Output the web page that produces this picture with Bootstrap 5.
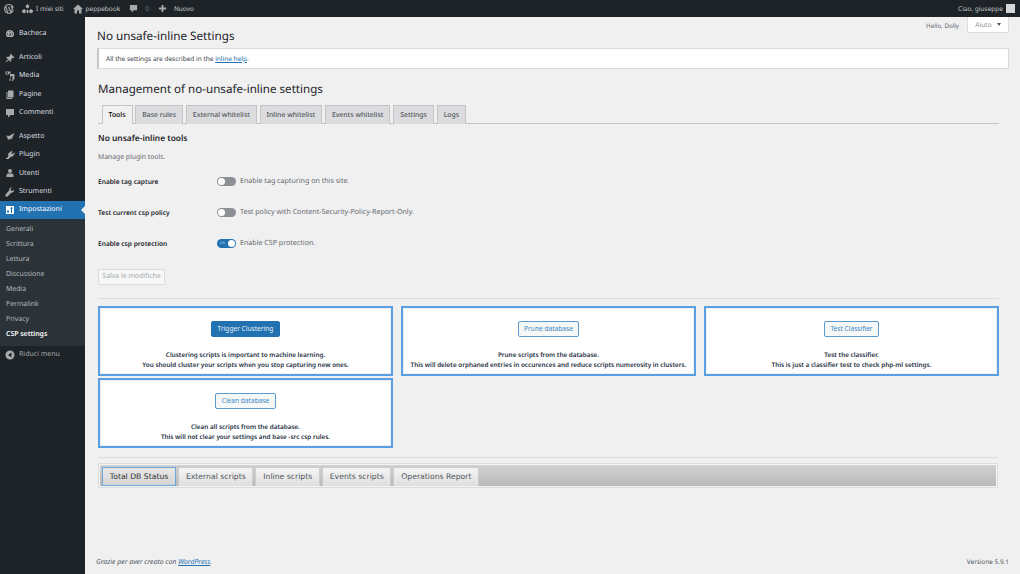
<!DOCTYPE html>
<html lang="it">
<head>
    <meta charset="UTF-8">
    <meta name="viewport" content="width=device-width, initial-scale=1.0">
    <title>No unsafe-inline Settings</title>
    <link href="https://cdn.jsdelivr.net/npm/bootstrap@5.3.0/dist/css/bootstrap.min.css" rel="stylesheet">
    <style>
        html, body { height: 574px; overflow: hidden; }
        body { background: #f0f0f1; color: #3c434a; font-family: "Noto Sans", sans-serif; font-size: 7px; line-height: 1.4; text-rendering: geometricPrecision; }
        .wp-bar { height: 17px; background: #1d2327; color: #c3c4c7; font-size: 6.5px; padding: 0 5px 0 4px; }
        .wp-bar svg { fill: #a7aaad; display: block; }
        .bar-item { gap: 3px; margin-right: 9px; }
        .avatar { width: 9px; height: 9px; background: #d5d6d8; margin-left: 3px; }
        .wp-shell { height: 557px; }
        .side-menu { width: 85px; background: #1d2327; color: #dcdde0; font-size: 7px; padding-top: 8px; }
        .menu-row { height: 18.3px; padding-left: 5px; gap: 4px; position: relative; }
        .menu-row svg { width: 10px; height: 10px; fill: #a7aaad; flex: none; }
        .menu-gap { height: 5.6px; }
        .menu-active { background: #2271b1; color: #fff; }
        .menu-active svg { fill: #fff; }
        .menu-active::after { content: ""; position: absolute; right: 0; top: 5px; border: 4px solid transparent; border-right-color: #f0f0f1; border-left: 0; }
        .sub-menu { background: #2c3338; color: #b4b9be; padding: 2.5px 0 4px 6px; font-size: 6.9px; }
        .sub-item { height: 15px; line-height: 15px; }
        .sub-current { color: #fff; font-weight: 600; }
        .collapse-row { color: #a7aaad; margin-top: 0; }
        .wp-main { padding: 0 11px 0 12px; min-width: 0; position: relative; }
        .hello-line { position: absolute; top: 5px; right: 11px; height: 8px; }
        .hello-text { font-size: 6.2px; color: #646970; margin-right: 8px; line-height: 8px; }
        .help-tab { width: 42px; height: 16px; background: #fff; border: 1px solid #dcdcde; border-top: 0; border-radius: 0 0 2px 2px; font-size: 6.6px; color: #8c8f94; margin-top: -5px; gap: 5px; }
        .help-tab i { border: 2.5px solid transparent; border-top: 3px solid #50575e; border-bottom: 0; }
        .page-title { font-size: 11.7px; font-weight: 400; color: #1d2327; margin: 0; padding-top: 12px; line-height: 15px; height: 31px; }
        .top-notice { height: 21px; background: #fff; border: 1px solid #dcdcde; border-left: 2px solid #c3c4c7; padding-left: 7px; font-size: 6.5px; }
        .top-notice a { color: #2271b1; }
        .sec-title { font-size: 11.6px; font-weight: 400; color: #1d2327; margin: 13px 0 0 1px; line-height: 16px; height: 16px; }
        .tab-strip { margin: 7px 10px 0 1px; padding-left: 3.5px; gap: 2.7px; border-bottom: 1px solid #c3c4c7; height: 19px; }
        .tab-cell { height: 19px; padding: 1px 6px 0; background: #dcdcde; border: 1px solid #c3c4c7; border-bottom: 0; color: #50575e; font-weight: 500; font-size: 6.9px; }
        .tab-on { background: #f0f0f1; color: #000; height: 19px; margin-bottom: -1px; }
        .tools-title { font-size: 8.4px; font-weight: 600; color: #1d2327; margin: 9px 0 0 1px; line-height: 12px; }
        .tools-desc { font-size: 6.8px; color: #646970; margin: 6px 0 0 1px; line-height: 12px; }
        .opt-row { height: 31px; margin-left: 1px; }
        .opt-label { width: 119px; font-weight: 600; color: #1d2327; font-size: 6.6px; }
        .opt-text { font-size: 7.1px; color: #646970; margin-left: 4px; }
        .opt-list { margin-top: 3px; }
        .tgl { width: 19px; height: 9px; border-radius: 5px; background: #8c8f94; position: relative; }
        .tgl::after { content: ""; position: absolute; left: 1px; top: 1px; width: 7px; height: 7px; border-radius: 50%; background: #fff; }
        .tgl-on { background: #2271b1; color: #bcd6ea; font-size: 3.5px; line-height: 9px; padding-left: 2.5px; }
        .tgl-on::after { left: 11px; }
        .save-btn { width: 67px; height: 16px; margin: 10px 0 0 1px; background: #f6f7f7; border: 1px solid #dcdcde; border-radius: 2px; color: #a7aaad; font-size: 6.9px; }
        .page-rule { border-top: 1px solid #dcdcde; margin: 13px 10px 0 1px; }
        .tool-grid { display: grid; grid-template-columns: repeat(3, 295px); gap: 2px 8px; margin: 7px 0 0 1px; }
        .tool-box { height: 70px; background: #fff; border: 2px solid #5a9fe0; box-shadow: inset 0 0 0 1px #f0f0f1; padding-top: 12.5px; text-align: center; color: #1d2f42; font-weight: 600; font-size: 6.35px; line-height: 9.6px; white-space: nowrap; }
        .tool-box p { margin: 13px 0 0; }
        .act-btn { height: 16.5px; padding: 0 5.5px; border: 1px solid #5b9bd0; border-radius: 2px; background: #f6f7f7; color: #3f87c0; font-weight: 400; font-size: 6.6px; line-height: 14px; }
        .act-primary { background: #2271b1; border-color: #2271b1; color: #e6f0f8; }
        .stats-wrap { margin: 9px 11px 0 1px; border-top: 1px solid #dcdcde; padding-top: 5px; }
        .stats-bar { height: 25px; border: 1px solid #dcdcde; background: linear-gradient(#d2d2d2, #b9b9b9); box-shadow: inset 0 0 0 1px #f5f5f5; padding: 3px 2px 0 3px; gap: 2px; }
        .stats-tab { height: 19px; padding: 1px 6.8px 0; background: linear-gradient(#f4f4f4, #dfdfdf); border: 1px solid #ccc; border-bottom: 0; color: #50575e; font-family: "DejaVu Sans", sans-serif; font-size: 7.7px; }
        .stats-on { background: linear-gradient(#e8e8e8, #d4d4d4); border: 1px solid #6ba8de; color: #333; }
        .foot-line { position: absolute; left: 11px; right: 11px; bottom: 6px; font-size: 6.4px; color: #50575e; }
        .foot-line em { font-size: 6.9px; }
        .foot-line a { color: #2271b1; }
    </style>
</head>
<body>
    <div class="wp-bar d-flex align-items-center">
        <svg class="me-2" width="10" height="10" viewBox="0 0 20 20"><path fill-rule="evenodd" d="M10 0a10 10 0 1 0 0 20 10 10 0 0 0 0-20zM2.2 10c0-1.1.2-2.2.7-3.200l3.700 10.200A7.800 7.800 0 0 1 2.200 10zm7.800 7.800c-.8 0-1.500-.1-2.200-.3l2.300-6.800 2.400 6.500a7.800 7.800 0 0 1-2.500.6zm1.100-11.500l2.800 8.300.8-2.600c.3-1.100.6-1.900.6-2.600 0-1-.4-1.700-.7-2.200-.4-.7-.8-1.200-.8-1.900 0-.7.6-1.400 1.300-1.400h.1A7.800 7.800 0 0 0 3.500 5.700h.5c.8 0 2.100-.1 2.100-.1.400 0 .5.600 0 .6l-.9.100 2.900 8.500 1.700-5.100-1.200-3.400-.8-.1c-.4 0-.4-.7 0-.6 0 0 1.300.1 2.100.1s2.100-.1 2.100-.1c.4 0 .5.600 0 .6zM15.900 15.100l2.400-6.900c.4-1.100.5-2 .5-2.800 0-.3 0-.5-.1-.8A7.800 7.800 0 0 1 15.900 15.100z"/></svg>
        <div class="bar-item d-flex align-items-center"><svg width="11" height="10" viewBox="0 0 20 18"><path d="M10 0l3 3v3l-3 2-3-2V3zM4 9l3 2.500v3L4 17l-4-2.500v-3zM16 9l4 2.500v3L16 17l-3-2.500v-3zM10 10l2 2v3l-2 2-2-2v-3z"/></svg><span>I miei siti</span></div>
        <div class="bar-item d-flex align-items-center"><svg width="10" height="10" viewBox="0 0 20 20"><path d="M10 1l10 9h-3v9h-5v-6H8v6H3v-9H0z"/></svg><span>peppebook</span></div>
        <div class="bar-item d-flex align-items-center"><svg width="9" height="9" viewBox="0 0 20 20"><path d="M2 2h16v12h-7l-5 5v-5H2z"/></svg><span class="text-secondary ms-1">0</span></div>
        <div class="bar-item d-flex align-items-center"><svg width="9" height="9" viewBox="0 0 20 20"><path d="M8 2h4v6h6v4h-6v6H8v-6H2V8h6z"/></svg><span class="ms-1">Nuovo</span></div>
        <div class="ms-auto d-flex align-items-center"><span>Ciao, giuseppe</span><div class="avatar"></div></div>
    </div>
    <div class="wp-shell d-flex">
        <div class="side-menu flex-shrink-0">
            <div class="menu-row d-flex align-items-center"><svg viewBox="0 0 20 20"><path fill-rule="evenodd" d="M10 2a8 8 0 0 0-8 8c0 2.500 1 4.500 2.500 6h11A8 8 0 0 0 10 2zm0 2a1.200 1.200 0 1 1 0 2.400A1.200 1.200 0 0 1 10 4zM5 9a1.200 1.200 0 1 1 0 2.400A1.200 1.200 0 0 1 5 9zm10 0a1.200 1.200 0 1 1 0 2.400A1.200 1.200 0 0 1 15 9zm-1.500-3.500l-2.500 5.700a1.500 1.500 0 1 1-1.500-.6z"/></svg>Bacheca</div>
            <div class="menu-gap"></div>
            <div class="menu-row d-flex align-items-center"><svg viewBox="0 0 20 20"><path d="M11 1l8 8-2 1-1-1-4 4 .5 3-1.500 1.500-3.500-3.500L2 19l-1-1 5-5.500L2.500 9 4 7.500l3 .5 4-4-1-1z"/></svg>Articoli</div>
            <div class="menu-row d-flex align-items-center"><svg viewBox="0 0 20 20"><path fill-rule="evenodd" d="M1 1h10v4H8l-1 2H1zM3 2.500v3h3v-3zM9 6h10v11h-3v1.500a1.500 1.500 0 1 1-1-1.400V10l-4 1v7a1.500 1.500 0 1 1-1-1.400V8z"/></svg>Media</div>
            <div class="menu-row d-flex align-items-center"><svg viewBox="0 0 20 20"><path d="M6 1h11v14H6zM3 4h2v12h9v2H3z"/></svg>Pagine</div>
            <div class="menu-row d-flex align-items-center"><svg viewBox="0 0 20 20"><path d="M2 2h16v12h-7l-5 5v-5H2z"/></svg>Commenti</div>
            <div class="menu-gap"></div>
            <div class="menu-row d-flex align-items-center"><svg viewBox="0 0 20 20"><path d="M19 2L8 8 2 7l3 3-3 1 4 1-1 4 8-3 1 3 1-6z"/></svg>Aspetto</div>
            <div class="menu-row d-flex align-items-center"><svg viewBox="0 0 20 20"><path d="M13 2l2 1-2 4 3 1.500 2-3.500 2 1-3 5c-1 2-3 3-5 2.500L9 16c-1 2-3 2-4 2H2v-2l3-1 2-3.500c-1-1.500-1-3.500 0-5z"/></svg>Plugin</div>
            <div class="menu-row d-flex align-items-center"><svg viewBox="0 0 20 20"><path d="M10 2a4 4 0 0 1 4 4 4 4 0 0 1-8 0 4 4 0 0 1 4-4zM3 18v-3c0-3 2-4 4-4h6c2 0 4 1 4 4v3z"/></svg>Utenti</div>
            <div class="menu-row d-flex align-items-center"><svg viewBox="0 0 20 20"><path d="M18 5l-3 3-3-1-1-3 3-3c-3-.5-6 1.500-5.500 5.500L1.500 14.500a2.800 2.800 0 0 0 4 4l7-7C16.500 12 18.500 9 18 5z"/></svg>Strumenti</div>
            <div class="menu-row menu-active d-flex align-items-center"><svg viewBox="0 0 20 20"><path fill-rule="evenodd" d="M2 2h16v16H2zM5 10v2H4v2h1v2h2v-2h1v-2H7v-2zm7-6v2h-1v2h1v8h2V8h1V6h-1V4z"/></svg>Impostazioni</div>
            <div class="sub-menu">
                <div class="sub-item">Generali</div>
                <div class="sub-item">Scrittura</div>
                <div class="sub-item">Lettura</div>
                <div class="sub-item">Discussione</div>
                <div class="sub-item">Media</div>
                <div class="sub-item">Permalink</div>
                <div class="sub-item">Privacy</div>
                <div class="sub-item sub-current">CSP settings</div>
            </div>
            <div class="menu-row collapse-row d-flex align-items-center"><svg viewBox="0 0 20 20"><path fill-rule="evenodd" d="M10 1a9 9 0 1 0 0 18 9 9 0 0 0 0-18zm3 4v10l-7-5z"/></svg>Riduci menu</div>
        </div>
        <div class="wp-main flex-grow-1">
            <div class="hello-line d-flex justify-content-end">
                <span class="hello-text">Hello, Dolly</span>
                <div class="help-tab d-flex align-items-center justify-content-center">Aiuto <i></i></div>
            </div>
            <h1 class="page-title">No unsafe-inline Settings</h1>
            <div class="top-notice d-flex align-items-center"><span>All the settings are described in the <a href="#">inline help</a>.</span></div>
            <h2 class="sec-title">Management of no-unsafe-inline settings</h2>
            <div class="tab-strip d-flex">
                <div class="tab-cell tab-on d-flex align-items-center">Tools</div>
                <div class="tab-cell d-flex align-items-center">Base rules</div>
                <div class="tab-cell d-flex align-items-center">External whitelist</div>
                <div class="tab-cell d-flex align-items-center">Inline whitelist</div>
                <div class="tab-cell d-flex align-items-center">Events whitelist</div>
                <div class="tab-cell d-flex align-items-center">Settings</div>
                <div class="tab-cell d-flex align-items-center">Logs</div>
            </div>
            <div class="tools-title">No unsafe-inline tools</div>
            <div class="tools-desc">Manage plugin tools.</div>
            <div class="opt-list">
                <div class="opt-row d-flex align-items-center"><div class="opt-label">Enable tag capture</div><span class="tgl"></span><span class="opt-text">Enable tag capturing on this site.</span></div>
                <div class="opt-row d-flex align-items-center"><div class="opt-label">Test current csp policy</div><span class="tgl"></span><span class="opt-text">Test policy with Content-Security-Policy-Report-Only.</span></div>
                <div class="opt-row d-flex align-items-center"><div class="opt-label">Enable csp protection</div><span class="tgl tgl-on">ON</span><span class="opt-text">Enable CSP protection.</span></div>
            </div>
            <div class="save-btn d-flex align-items-center justify-content-center">Salva le modifiche</div>
            <div class="page-rule"></div>
            <div class="tool-grid">
                <div class="tool-box"><button class="act-btn act-primary">Trigger Clustering</button><p>Clustering scripts is important to machine learning.<br>You should cluster your scripts when you stop capturing new ones.</p></div>
                <div class="tool-box"><button class="act-btn">Prune database</button><p>Prune scripts from the database.<br>This will delete orphaned entries in occurences and reduce scripts numerosity in clusters.</p></div>
                <div class="tool-box"><button class="act-btn">Test Classifier</button><p>Test the classifier.<br>This is just a classifier test to check php-ml settings.</p></div>
                <div class="tool-box"><button class="act-btn">Clean database</button><p>Clean all scripts from the database.<br>This will not clear your settings and base -src csp rules.</p></div>
            </div>
            <div class="stats-wrap">
                <div class="stats-bar d-flex">
                    <div class="stats-tab stats-on d-flex align-items-center">Total DB Status</div>
                    <div class="stats-tab d-flex align-items-center">External scripts</div>
                    <div class="stats-tab d-flex align-items-center">Inline scripts</div>
                    <div class="stats-tab d-flex align-items-center">Events scripts</div>
                    <div class="stats-tab d-flex align-items-center">Operations Report</div>
                </div>
            </div>
            <div class="foot-line d-flex justify-content-between"><em>Grazie per aver creato con <a href="#">WordPress</a>.</em><span>Versione 5.9.1</span></div>
        </div>
    </div>
    <script src="https://cdn.jsdelivr.net/npm/bootstrap@5.3.0/dist/js/bootstrap.bundle.min.js"></script>
</body>
</html>
